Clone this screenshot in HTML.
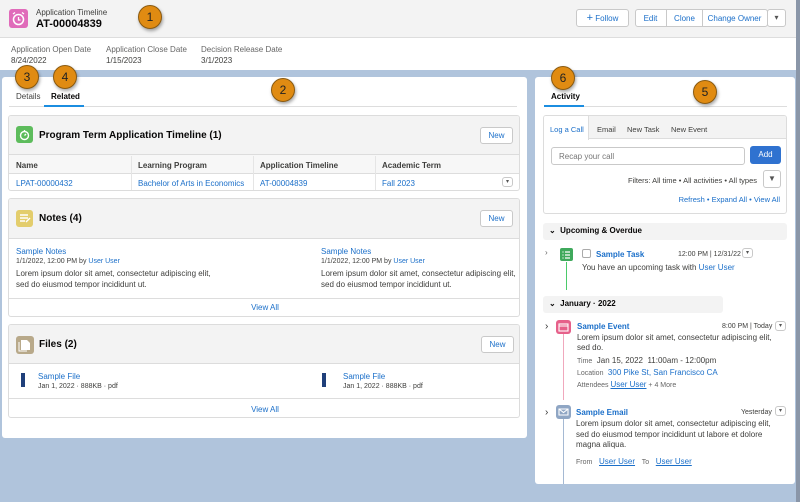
<!DOCTYPE html>
<html><head><meta charset="utf-8"><style>
*{box-sizing:border-box;margin:0;padding:0}
body{width:800px;height:502px;overflow:hidden;background:#b0c4dc;font-family:"Liberation Sans",sans-serif;font-size:8px;color:#3e3e3c;position:relative}
.a{position:absolute}
.lnk{color:#1b6fc9}
.btn{position:absolute;border:1px solid #c9c9c9;background:#fff;border-radius:3px;color:#1b6fc9;font-size:8px;text-align:center}
.card{position:absolute;border:1px solid #dcdcdc;border-radius:3px;background:#fff;overflow:hidden}
.ch{position:absolute;left:0;right:0;top:0;background:#f3f3f3;border-bottom:1px solid #dcdcdc}
.ico{position:absolute;width:17px;height:17px;border-radius:3px}
.t{font-weight:bold;color:#080707;font-size:10px}
.num{position:absolute;width:24px;height:24px;border-radius:50%;background:#e08b12;border:1px solid #8a5a10;box-shadow:1px 2px 3px rgba(0,0,0,.35);color:#222;font-size:12px;text-align:center;line-height:22px}
.g{color:#54698d}
</style></head><body>
<div class="a" style="left:0;top:0;width:796px;height:38px;background:#f3f3f3;border-bottom:1px solid #ddd"></div>
<div class="a" style="left:0;top:38px;width:796px;height:32px;background:#fff"></div>
<div class="a" style="left:796px;top:0;width:4px;height:502px;background:#8a96a8"></div>
<div class="ico" style="left:9px;top:9px;width:19px;height:19px;background:#e06bba"><svg width="19" height="19"><circle cx="9.5" cy="10.5" r="5" fill="none" stroke="#fff" stroke-width="1.5"/><path d="M9.5 8v3h2M4 5l2-1.5M15 5l-2-1.5" stroke="#fff" stroke-width="1.3" fill="none"/></svg></div>
<div class="a" style="left:36px;top:8px;font-size:8px">Application Timeline</div>
<div class="a" style="left:36px;top:18px;font-size:11px;font-weight:bold;color:#080707">AT-00004839</div>
<div class="btn" style="left:576px;top:9px;width:53px;height:18px;line-height:16px"><span style="font-size:11px">+</span> Follow</div>
<div class="btn" style="left:635px;top:9px;width:133px;height:18px"></div>
<div class="a lnk" style="left:635px;top:14px;width:31px;text-align:center">Edit</div>
<div class="a" style="left:666px;top:10px;width:1px;height:16px;background:#c9c9c9"></div>
<div class="a lnk" style="left:667px;top:14px;width:35px;text-align:center">Clone</div>
<div class="a" style="left:702px;top:10px;width:1px;height:16px;background:#c9c9c9"></div>
<div class="a lnk" style="left:703px;top:14px;width:63px;text-align:center">Change Owner</div>
<div class="btn" style="left:767px;top:9px;width:19px;height:18px;color:#555;line-height:16px">▾</div>
<div class="a" style="left:11px;top:45px;color:#666">Application Open Date</div><div class="a" style="left:11px;top:56px">8/24/2022</div>
<div class="a" style="left:106px;top:45px;color:#666">Application Close Date</div><div class="a" style="left:106px;top:56px">1/15/2023</div>
<div class="a" style="left:201px;top:45px;color:#666">Decision Release Date</div><div class="a" style="left:201px;top:56px">3/1/2023</div>

<div class="a" style="left:2px;top:77px;width:525px;height:361px;background:#fff;border-radius:3px"></div>
<div class="a" style="left:9px;top:106px;width:508px;height:1px;background:#ddd"></div>
<div class="a" style="left:16px;top:92px">Details</div>
<div class="a" style="left:51px;top:92px;font-weight:bold;color:#080707">Related</div>
<div class="a" style="left:44px;top:105px;width:40px;height:2px;background:#1b8de0"></div>

<div class="card" style="left:8px;top:115px;width:512px;height:76px">
 <div class="ch" style="height:39px"></div>
 <div class="ico" style="left:7px;top:10px;background:#5dbc5c"><svg width="17" height="17"><circle cx="8.5" cy="9.5" r="4" fill="none" stroke="#fff" stroke-width="1.4"/><path d="M8.5 4v2M8.5 9.5l1.5-1.5" stroke="#fff" stroke-width="1.3"/></svg></div>
 <div class="a t" style="left:30px;top:14px">Program Term Application Timeline (1)</div>
 <div class="btn" style="left:471px;top:11px;width:33px;height:17px;line-height:15px">New</div>
 <div class="a" style="left:0;top:39px;width:512px;height:19px;background:#f7f7f7;border-bottom:1px solid #ddd"></div>
 <div class="a" style="left:7px;top:45px;font-weight:bold">Name</div>
 <div class="a" style="left:122px;top:40px;width:1px;height:35px;background:#e5e5e5"></div>
 <div class="a" style="left:129px;top:45px;font-weight:bold">Learning Program</div>
 <div class="a" style="left:244px;top:40px;width:1px;height:35px;background:#e5e5e5"></div>
 <div class="a" style="left:251px;top:45px;font-weight:bold">Application Timeline</div>
 <div class="a" style="left:366px;top:40px;width:1px;height:35px;background:#e5e5e5"></div>
 <div class="a" style="left:373px;top:45px;font-weight:bold">Academic Term</div>
 <div class="a lnk" style="left:7px;top:63px">LPAT-00000432</div>
 <div class="a lnk" style="left:129px;top:63px">Bachelor of Arts in Economics</div>
 <div class="a lnk" style="left:251px;top:63px">AT-00004839</div>
 <div class="a lnk" style="left:373px;top:63px">Fall 2023</div>
 <div class="btn" style="left:493px;top:61px;width:11px;height:10px;color:#555;font-size:6px;line-height:8px">▾</div>
</div>

<div class="card" style="left:8px;top:198px;width:512px;height:119px">
 <div class="ch" style="height:40px"></div>
 <div class="ico" style="left:7px;top:11px;background:#e3cd6c"><svg width="17" height="17"><path d="M4 5h8M4 8h8M4 11h5M10 12l4-4" stroke="#fff" stroke-width="1.4"/></svg></div>
 <div class="a t" style="left:30px;top:14px">Notes (4)</div>
 <div class="btn" style="left:471px;top:11px;width:33px;height:17px;line-height:15px">New</div>
 <div class="a lnk" style="left:7px;top:48px">Sample Notes</div>
 <div class="a" style="left:7px;top:59px;font-size:7px">1/1/2022, 12:00 PM by <span class="lnk">User User</span></div>
 <div class="a" style="left:7px;top:69px;width:205px;line-height:11px">Lorem ipsum dolor sit amet, consectetur adipiscing elit, sed do eiusmod tempor incididunt ut.</div>
 <div class="a lnk" style="left:312px;top:48px">Sample Notes</div>
 <div class="a" style="left:312px;top:59px;font-size:7px">1/1/2022, 12:00 PM by <span class="lnk">User User</span></div>
 <div class="a" style="left:312px;top:69px;width:200px;line-height:11px">Lorem ipsum dolor sit amet, consectetur adipiscing elit, sed do eiusmod tempor incididunt ut.</div>
 <div class="a" style="left:0;top:99px;width:512px;height:1px;background:#ddd"></div>
 <div class="a lnk" style="left:0;top:104px;width:512px;text-align:center">View All</div>
</div>

<div class="card" style="left:8px;top:324px;width:512px;height:94px">
 <div class="ch" style="height:39px"></div>
 <div class="ico" style="left:7px;top:11px;width:18px;height:18px;background:#b8a98a"><svg width="18" height="18"><path d="M5 4h6l3 3v7H5z" fill="#fff"/><path d="M3 6v9h8" stroke="#fff" fill="none"/></svg></div>
 <div class="a t" style="left:30px;top:14px">Files (2)</div>
 <div class="btn" style="left:472px;top:11px;width:33px;height:17px;line-height:15px">New</div>
 <div class="a" style="left:12px;top:48px;width:4px;height:14px;background:#1f3f7a"></div>
 <div class="a lnk" style="left:29px;top:47px">Sample File</div>
 <div class="a" style="left:29px;top:58px;font-size:7px">Jan 1, 2022 · 888KB · pdf</div>
 <div class="a" style="left:313px;top:48px;width:4px;height:14px;background:#1f3f7a"></div>
 <div class="a lnk" style="left:334px;top:47px">Sample File</div>
 <div class="a" style="left:334px;top:58px;font-size:7px">Jan 1, 2022 · 888KB · pdf</div>
 <div class="a" style="left:0;top:73px;width:512px;height:1px;background:#ddd"></div>
 <div class="a lnk" style="left:0;top:80px;width:512px;text-align:center">View All</div>
</div>

<div class="a" style="left:535px;top:77px;width:260px;height:407px;background:#fff;border-radius:3px"></div>
<div class="a" style="left:544px;top:106px;width:243px;height:1px;background:#ddd"></div>
<div class="a" style="left:551px;top:92px;font-weight:bold;color:#080707">Activity</div>
<div class="a" style="left:544px;top:105px;width:40px;height:2px;background:#1b8de0"></div>
<div class="card" style="left:543px;top:115px;width:244px;height:99px">
 <div class="a" style="left:0;top:0;width:244px;height:23px;background:#f3f3f3;border-bottom:1px solid #ddd"></div>
 <div class="a" style="left:0;top:0;width:45px;height:24px;background:#fff;border-right:1px solid #ddd"></div>
 <div class="a lnk" style="left:6px;top:9px;font-size:7.5px">Log a Call</div>
 <div class="a" style="left:53px;top:9px;font-size:7.5px">Email</div>
 <div class="a" style="left:83px;top:9px;font-size:7.5px">New Task</div>
 <div class="a" style="left:127px;top:9px;font-size:7.5px">New Event</div>
 <div class="a" style="left:7px;top:31px;width:194px;height:18px;border:1px solid #c9c9c9;border-radius:3px;color:#777;padding:4px 7px">Recap your call</div>
 <div class="a" style="left:206px;top:30px;width:31px;height:18px;background:#2f72d0;border-radius:3px;color:#fff;text-align:center;line-height:18px">Add</div>
 <div class="a" style="left:0;width:213px;top:60px;text-align:right;font-size:7.5px">Filters: All time • All activities • All types</div>
 <div class="btn" style="left:219px;top:54px;width:18px;height:18px;color:#555;line-height:16px">▼</div>
 <div class="a lnk" style="left:0;width:236px;top:79px;text-align:right;font-size:7.5px">Refresh • Expand All • View All</div>
</div>
<div class="a" style="left:543px;top:223px;width:244px;height:17px;background:#f3f3f3;border-radius:3px"></div>
<div class="a" style="left:549px;top:226px;font-weight:bold;color:#080707">⌄&nbsp; Upcoming &amp; Overdue</div>
<div class="a" style="left:545px;top:248px;color:#666">›</div>
<div class="ico" style="left:560px;top:248px;width:13px;height:13px;background:#3fa95c;border-radius:2px"><svg width="13" height="13"><path d="M5 4h5M5 7h5M5 10h5M2.5 4h1M2.5 7h1M2.5 10h1" stroke="#fff" stroke-width="1.2"/></svg></div>
<div class="a" style="left:566px;top:262px;width:1px;height:28px;background:#4bca6a"></div>
<div class="a" style="left:582px;top:249px;width:9px;height:9px;border:1px solid #aaa;border-radius:2px"></div>
<div class="a lnk" style="left:596px;top:250px;font-weight:bold">Sample Task</div>
<div class="a" style="left:678px;top:251px;font-size:7px">12:00 PM | 12/31/22</div>
<div class="btn" style="left:742px;top:248px;width:11px;height:10px;color:#555;font-size:6px;line-height:8px">▾</div>
<div class="a" style="left:582px;top:263px">You have an upcoming task with <span class="lnk">User User</span></div>
<div class="a" style="left:543px;top:296px;width:180px;height:17px;background:#f3f3f3;border-radius:3px"></div>
<div class="a" style="left:549px;top:299px;font-weight:bold;color:#080707">⌄&nbsp; January · 2022</div>
<div class="a" style="left:545px;top:321px;color:#333;font-size:10px">›</div>
<div class="ico" style="left:556px;top:320px;width:15px;height:14px;background:#e6608a"><svg width="15" height="14"><rect x="3" y="4" width="9" height="7" fill="none" stroke="#fff" stroke-width="1.1"/><path d="M3 6h9" stroke="#fff"/></svg></div>
<div class="a" style="left:563px;top:334px;width:1px;height:66px;background:#f0a8bd"></div>
<div class="a lnk" style="left:577px;top:322px;font-weight:bold">Sample Event</div>
<div class="a" style="left:722px;top:323px;font-size:7px">8:00 PM | Today</div>
<div class="btn" style="left:775px;top:321px;width:11px;height:10px;color:#555;font-size:6px;line-height:8px">▾</div>
<div class="a" style="left:577px;top:333px;width:200px;line-height:10px">Lorem ipsum dolor sit amet, consectetur adipiscing elit, sed do.</div>
<div class="a" style="left:577px;top:356px"><span style="font-size:7px;color:#666">Time</span>&nbsp; Jan 15, 2022&nbsp; 11:00am - 12:00pm</div>
<div class="a" style="left:577px;top:368px"><span style="font-size:7px;color:#666">Location</span>&nbsp; <span class="lnk">300 Pike St, San Francisco CA</span></div>
<div class="a" style="left:577px;top:380px;font-size:7px;color:#666">Attendees <span class="lnk" style="text-decoration:underline;font-size:8px">User User</span> + 4 More</div>
<div class="a" style="left:545px;top:407px;color:#333;font-size:10px">›</div>
<div class="ico" style="left:556px;top:405px;width:15px;height:14px;background:#8fa6c4"><svg width="15" height="14"><path d="M3 4h9v6H3zM3 4l4.5 3.5L12 4" fill="none" stroke="#fff" stroke-width="1.1"/></svg></div>
<div class="a" style="left:563px;top:419px;width:1px;height:65px;background:#a5b9d3"></div>
<div class="a lnk" style="left:576px;top:408px;font-weight:bold">Sample Email</div>
<div class="a" style="left:741px;top:409px;font-size:7px">Yesterday</div>
<div class="btn" style="left:775px;top:406px;width:11px;height:10px;color:#555;font-size:6px;line-height:8px">▾</div>
<div class="a" style="left:576px;top:419px;width:205px;line-height:10.5px">Lorem ipsum dolor sit amet, consectetur adipiscing elit, sed do eiusmod tempor incididunt ut labore et dolore magna aliqua.</div>
<div class="a" style="left:576px;top:457px"><span style="font-size:7px;color:#666">From</span>&nbsp;&nbsp; <span class="lnk" style="text-decoration:underline">User User</span>&nbsp;&nbsp; <span style="font-size:7px;color:#666">To</span>&nbsp;&nbsp; <span class="lnk" style="text-decoration:underline">User User</span></div>

<div class="num" style="left:138px;top:5px">1</div>
<div class="num" style="left:271px;top:78px">2</div>
<div class="num" style="left:15px;top:65px">3</div>
<div class="num" style="left:53px;top:65px">4</div>
<div class="num" style="left:693px;top:80px">5</div>
<div class="num" style="left:551px;top:66px">6</div>
</body></html>
